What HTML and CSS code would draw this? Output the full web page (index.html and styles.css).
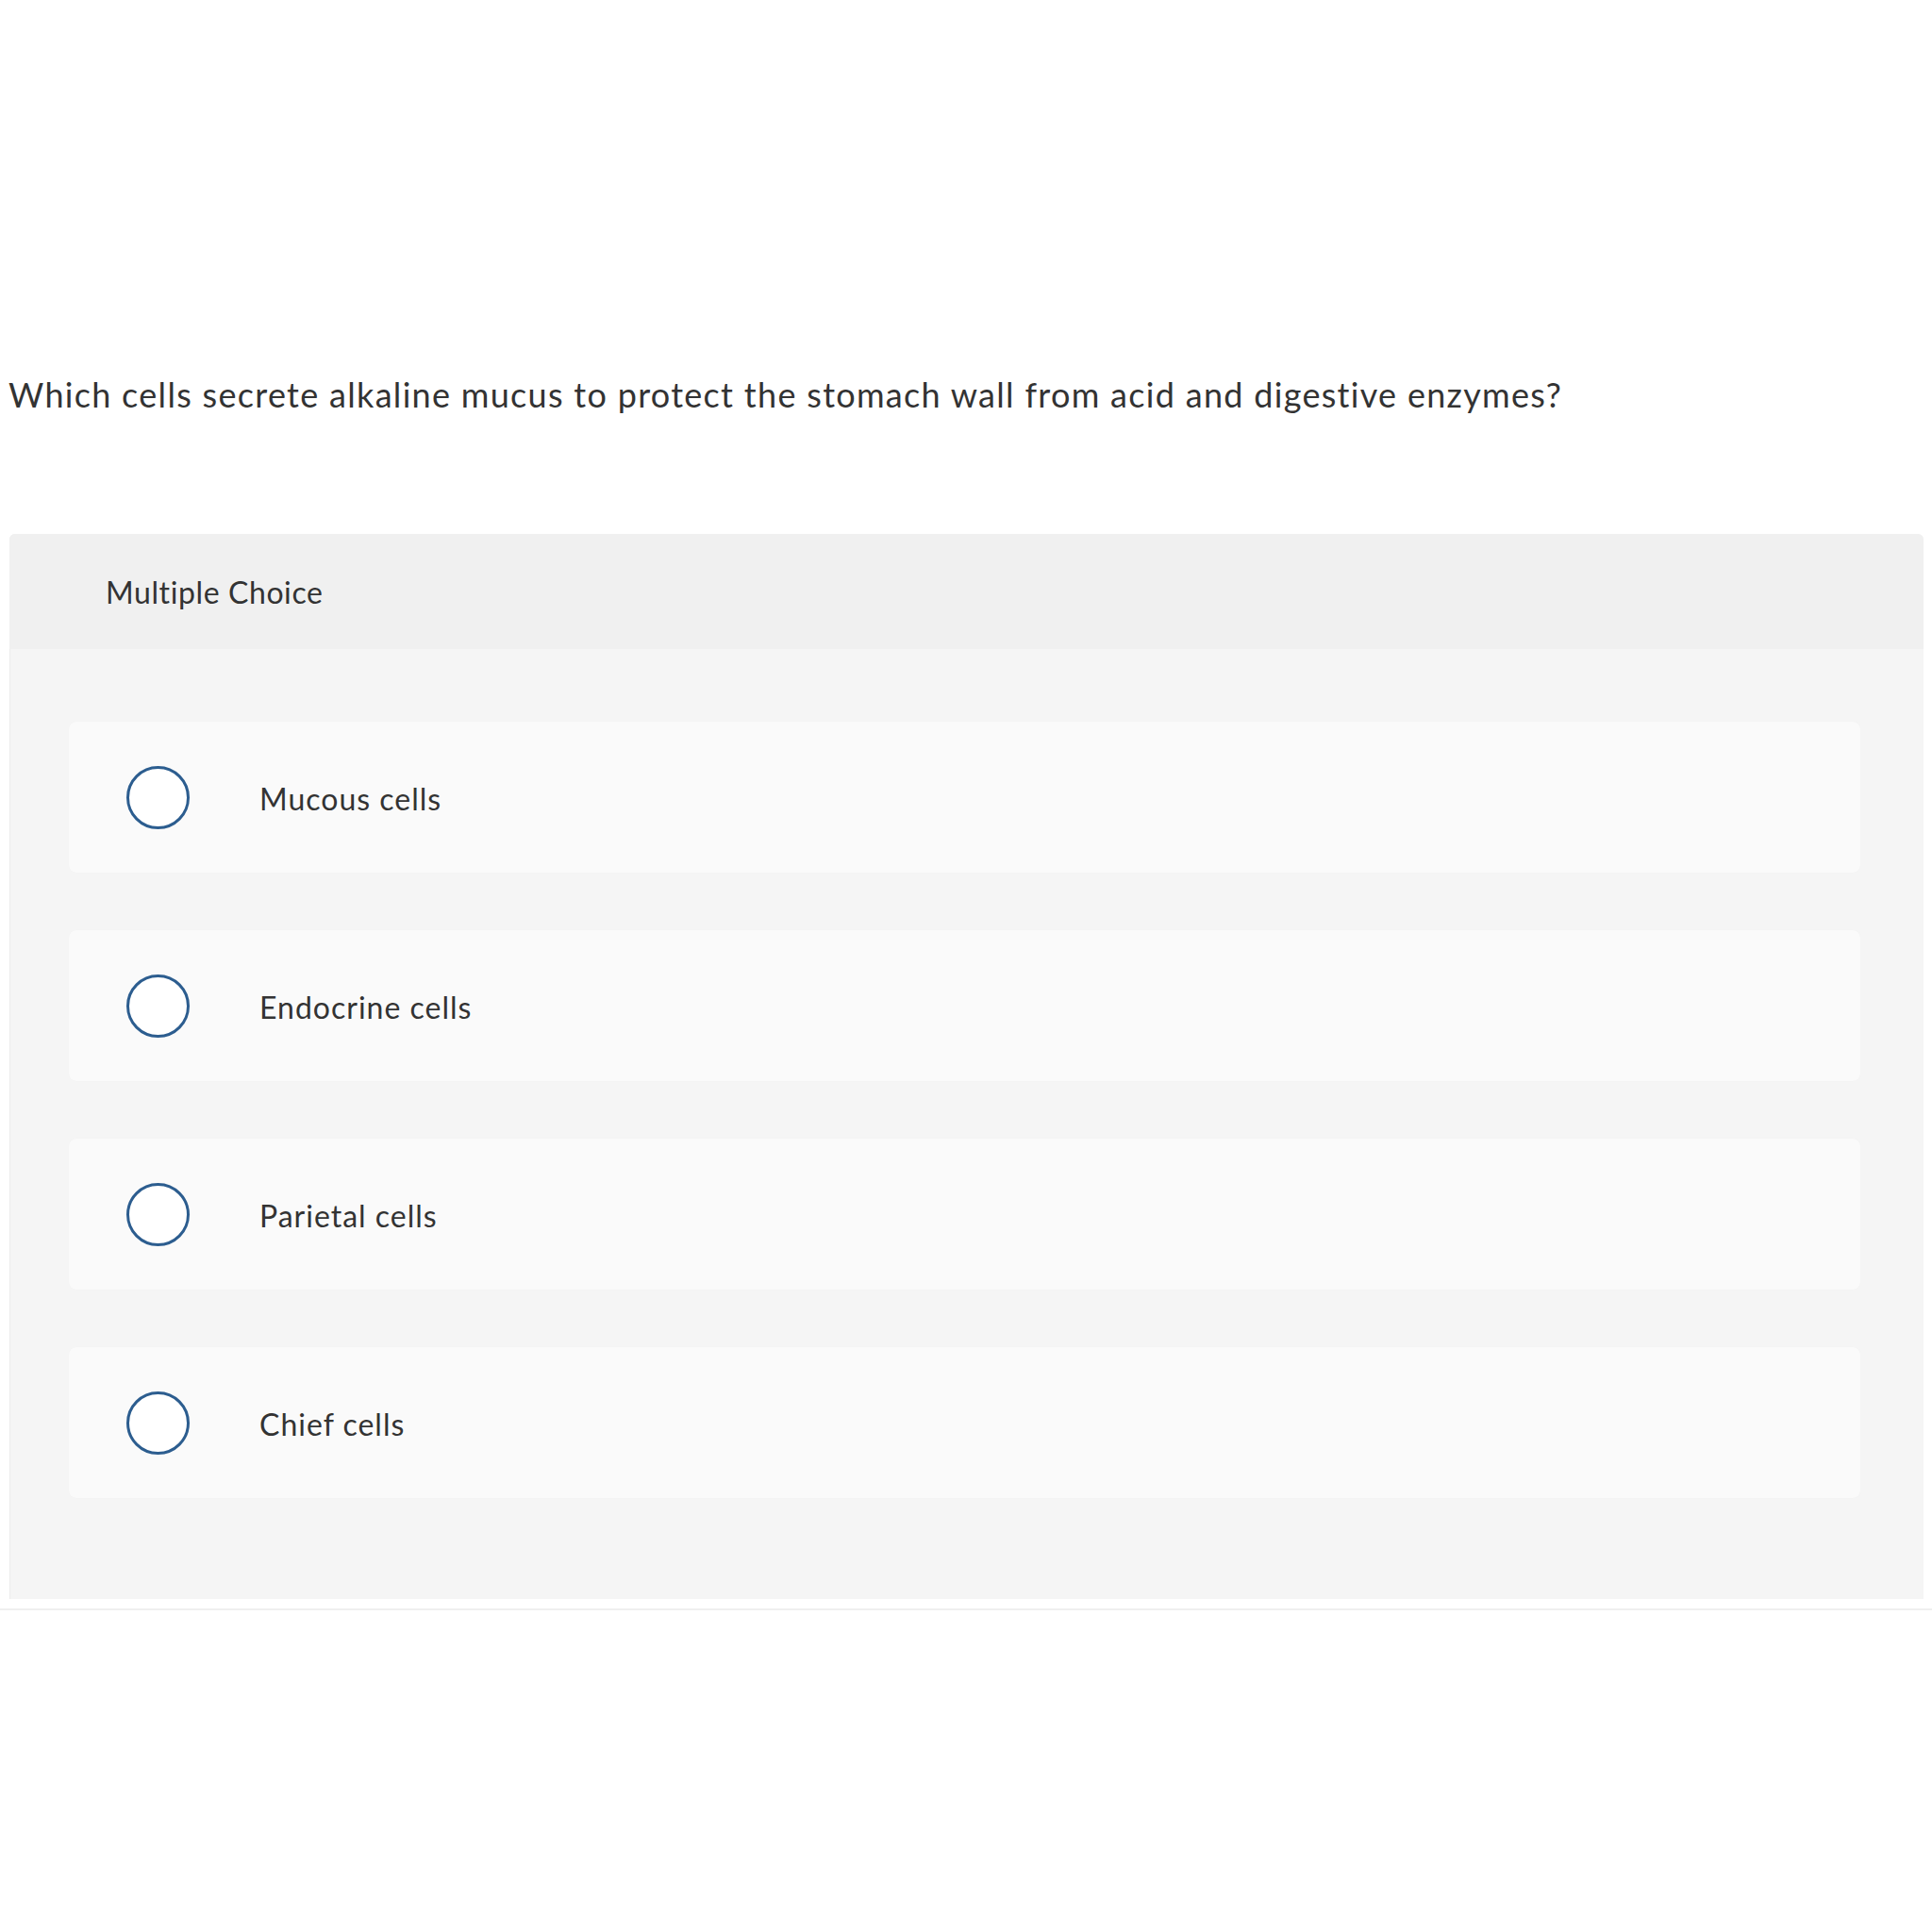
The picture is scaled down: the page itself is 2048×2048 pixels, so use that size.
FILE: index.html
```html
<!DOCTYPE html>
<html>
<head>
<meta charset="utf-8">
<link rel="stylesheet" href="styles.css">
</head>
<body>
<div class="page">
  <p class="question">Which cells secrete alkaline mucus to protect the stomach wall from acid and digestive enzymes?</p>
  <section class="quiz">
    <div class="quiz-header">Multiple Choice</div>
    <div class="quiz-body">
      <label class="option"><span class="radio"></span><span class="option-text">Mucous cells</span></label>
      <label class="option"><span class="radio"></span><span class="option-text">Endocrine cells</span></label>
      <label class="option"><span class="radio"></span><span class="option-text">Parietal cells</span></label>
      <label class="option"><span class="radio"></span><span class="option-text">Chief cells</span></label>
    </div>
  </section>
  <div class="divider"></div>
</div>
</body>
</html>
```
FILE: styles.css
```css
html, body {
  margin: 0;
  padding: 0;
  background: #ffffff;
}
body {
  font-family: Lato, "Open Sans", sans-serif;
  color: #333333;
}
.page {
  width: 2048px;
}
.question {
  margin: 0;
  padding: 393px 0 0 9px;
  height: 57px;
  font-size: 36px;
  line-height: 50px;
  letter-spacing: 1.3px;
  color: #333333;
}
.quiz {
  margin: 116px 0 0 10px;
  width: 2029px;
  background: #f5f5f5;
  border-radius: 6px 6px 0 0;
  box-shadow: inset 1px 0 0 #ececec;
}
.quiz-header {
  height: 122px;
  box-sizing: border-box;
  display: flex;
  align-items: center;
  padding-left: 102px;
  background: #f0f0f0;
  border-radius: 6px 6px 0 0;
  font-size: 32px;
  letter-spacing: 0.6px;
  color: #333333;
}
.quiz-body {
  display: flex;
  flex-direction: column;
  gap: 61px;
  padding: 77px 67px 107px 63px;
}
.option {
  display: flex;
  align-items: center;
  height: 160px;
  box-sizing: border-box;
  padding-left: 61px;
  background: #fafafa;
  border-radius: 8px;
  box-shadow: 0 0 1px rgba(0,0,0,0.04);
}
.radio {
  width: 67px;
  height: 67px;
  box-sizing: border-box;
  border: 3px solid #2c5d8f;
  border-radius: 50%;
  background: #ffffff;
  flex: none;
}
.option-text {
  margin-left: 74px;
  padding-top: 2px;
  font-size: 32px;
  letter-spacing: 1px;
  color: #333333;
}
.divider {
  margin-top: 10px;
  height: 2px;
  background: #efefef;
}
```
